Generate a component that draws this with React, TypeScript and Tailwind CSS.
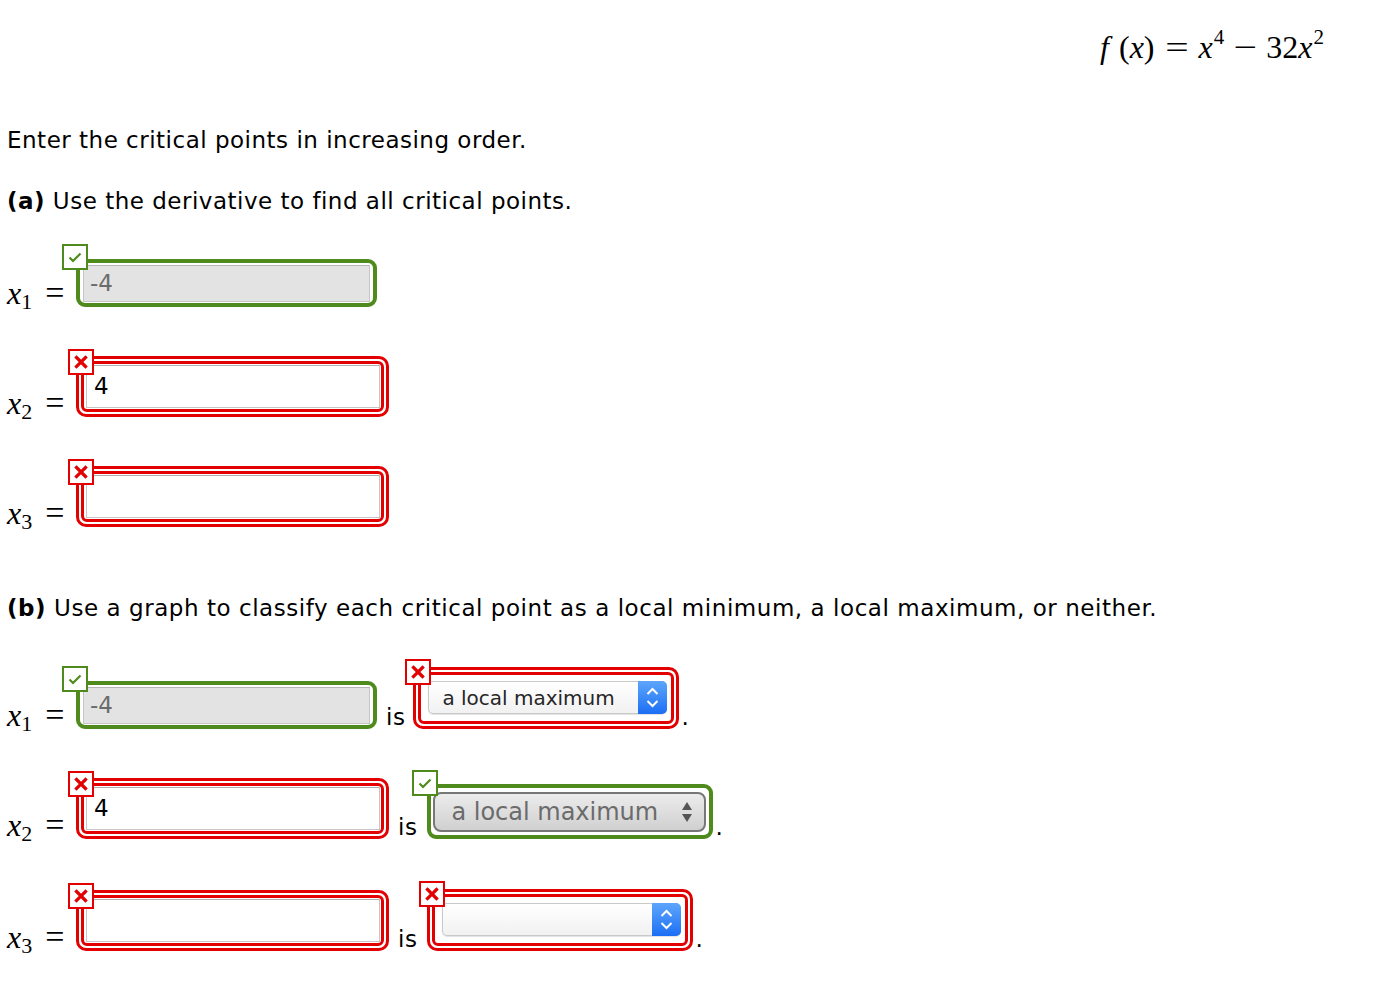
import React from 'react';

const Badge = ({ ok, className }: { ok?: boolean; className: string }) => (
  <div
    className={
      ok
        ? `absolute z-10 w-[26px] h-[26px] border-2 border-[#4f8a1d] bg-white flex items-center justify-center ${className}`
        : `absolute z-10 w-[26px] h-[26px] border-2 border-[#e20000] bg-white flex items-center justify-center ${className}`
    }
  >
    {ok ? (
      <svg width="16" height="16" viewBox="0 0 16 16">
        <polyline points="2.5,8.5 6,12 13.5,4.5" fill="none" stroke="#4f8a1d" strokeWidth="2.2" />
      </svg>
    ) : (
      <svg width="14" height="14" viewBox="0 0 14 14">
        <path d="M2.5 2.5 L11.5 11.5 M11.5 2.5 L2.5 11.5" stroke="#e20000" strokeWidth="3.2" strokeLinecap="square" />
      </svg>
    )}
  </div>
);

const Label = ({ n }: { n: string }) => (
  <div className="w-[69px] flex items-baseline leading-none translate-y-[3px] font-['Liberation_Serif',serif] text-black">
    <span className="italic text-[32px]">x</span>
    <span className="relative top-[5px] text-[22px]">{n}</span>
    <span className="ml-[13px] text-[34px]">=</span>
  </div>
);

const GreenInput = ({ value }: { value: string }) => (
  <div className="relative">
    <Badge ok className="-left-[14px] -top-[15px]" />
    <div className="w-[301px] h-[48px] border-4 border-[#4f8a1d] rounded-[9px] px-[3px] pt-[2px] pb-[1px]">
      <div className="h-full bg-[#e3e3e3] border border-[#c6c6c6] border-t-[#b5b5b5] text-[#6b6b6b] pl-[6px] flex items-center text-[23px]">
        {value}
      </div>
    </div>
  </div>
);

const RedInput = ({ value }: { value: string }) => (
  <div className="relative">
    <div className="w-[313px] h-[61px] border-[3px] border-[#e20000] rounded-[10px] p-[2px]">
      <div className="h-full border-[3px] border-[#e20000] rounded-[6px] pl-[2px] pr-[1px] py-[1px]">
        <div className="h-full bg-white border border-[#c6c6c6] border-t-[#b0b0b0] pl-[7px] flex items-center text-[23px] text-black">
          {value}
        </div>
      </div>
    </div>
    <Badge className="-left-[8px] -top-[7px]" />
  </div>
);

const MacSelect = ({ value }: { value: string }) => (
  <div className="h-[33px] flex rounded-[5px] border border-[#c9c9c9] bg-gradient-to-b from-white to-[#f1f1f1] shadow-[0_1px_1px_rgba(0,0,0,0.12)]">
    <span className="flex-1 pl-[13px] flex items-center text-[20px] text-[#262626] leading-none">{value}</span>
    <div className="w-[29px] -my-px -mr-px rounded-r-[5px] bg-gradient-to-b from-[#5da5fb] to-[#1a6ef4] flex items-center justify-center">
      <svg width="29" height="33" viewBox="0 0 29 33">
        <polyline points="9.5,13 14.5,8 19.5,13" fill="none" stroke="white" strokeWidth="2" />
        <polyline points="9.5,20 14.5,25 19.5,20" fill="none" stroke="white" strokeWidth="2" />
      </svg>
    </div>
  </div>
);

const RedSelect = ({ value }: { value: string }) => (
  <div className="relative">
    <div className="w-[266px] h-[62px] border-[3px] border-[#e20000] rounded-[10px] p-[2px]">
      <div className="h-full border-[3px] border-[#e20000] rounded-[6px] pl-[7px] pr-[4px] pt-[6px]">
        <MacSelect value={value} />
      </div>
    </div>
    <Badge className="-left-[8px] -top-[8px]" />
  </div>
);

const GreenSelect = ({ value }: { value: string }) => (
  <div className="relative">
    <Badge ok className="-left-[15px] -top-[14px]" />
    <div className="w-[286px] h-[55px] border-4 border-[#4f8a1d] rounded-[9px] pl-[2px] pr-[3px] pt-[4px] pb-[3px]">
      <div className="h-full flex items-center rounded-[8px] border-2 border-[#777] bg-gradient-to-b from-[#ececec] to-[#d0d0d0]">
        <span className="flex-1 pl-[16px] text-[24px] text-[#6b6b6b] leading-none">{value}</span>
        <svg width="10" height="20" viewBox="0 0 10 20" className="mr-[12px]">
          <polygon points="0,8 5,0 10,8" fill="#555" />
          <polygon points="0,12 10,12 5,20" fill="#555" />
        </svg>
      </div>
    </div>
  </div>
);

const Is = ({ className }: { className: string }) => (
  <span className={`leading-none text-[23px] tracking-[0.5px] ${className}`}>is</span>
);
const Dot = () => <span className="leading-none text-[23px] ml-[2px]">.</span>;

export default function App() {
  return (
    <div className="min-h-screen bg-white text-black pl-[7px] font-['DejaVu_Sans',sans-serif]">
      <div className="flex items-baseline justify-end pr-[74px] pt-[31px] leading-none font-['Liberation_Serif',serif] text-[32px]">
        <span className="italic">f</span>
        <span className="ml-[10px]">(</span>
        <span className="italic">x</span>
        <span>)</span>
        <span className="mx-[13px] inline-block scale-x-[1.3]">=</span>
        <span className="italic">x</span>
        <span className="relative -top-[14px] ml-[1px] text-[21px]">4</span>
        <span className="mx-[12px] inline-block scale-x-[1.3]">−</span>
        <span>32</span>
        <span className="italic">x</span>
        <span className="relative -top-[14px] ml-[1px] text-[21px]">2</span>
      </div>

      <p className="mt-[66px] text-[23px] leading-none tracking-[0.5px]">Enter the critical points in increasing order.</p>
      <p className="mt-[38px] text-[23px] leading-none tracking-[0.5px]">
        <b>(a)</b> Use the derivative to find all critical points.
      </p>

      <div className="h-[94px] flex items-end">
        <Label n="1" />
        <GreenInput value="-4" />
      </div>
      <div className="h-[110px] flex items-end">
        <Label n="2" />
        <RedInput value="4" />
      </div>
      <div className="h-[110px] flex items-end">
        <Label n="3" />
        <RedInput value="" />
      </div>

      <p className="mt-[70px] text-[23px] leading-none tracking-[0.55px]">
        <b>(b)</b> Use a graph to classify each critical point as a local minimum, a local maximum, or neither.
      </p>

      <div className="h-[109px] flex items-end">
        <Label n="1" />
        <GreenInput value="-4" />
        <Is className="ml-[9px] mr-[8px]" />
        <RedSelect value="a local maximum" />
        <Dot />
      </div>
      <div className="h-[110px] flex items-end">
        <Label n="2" />
        <RedInput value="4" />
        <Is className="ml-[9px] mr-[10px]" />
        <GreenSelect value="a local maximum" />
        <Dot />
      </div>
      <div className="h-[112px] flex items-end">
        <Label n="3" />
        <RedInput value="" />
        <Is className="ml-[9px] mr-[10px]" />
        <RedSelect value="" />
        <Dot />
      </div>
    </div>
  );
}
